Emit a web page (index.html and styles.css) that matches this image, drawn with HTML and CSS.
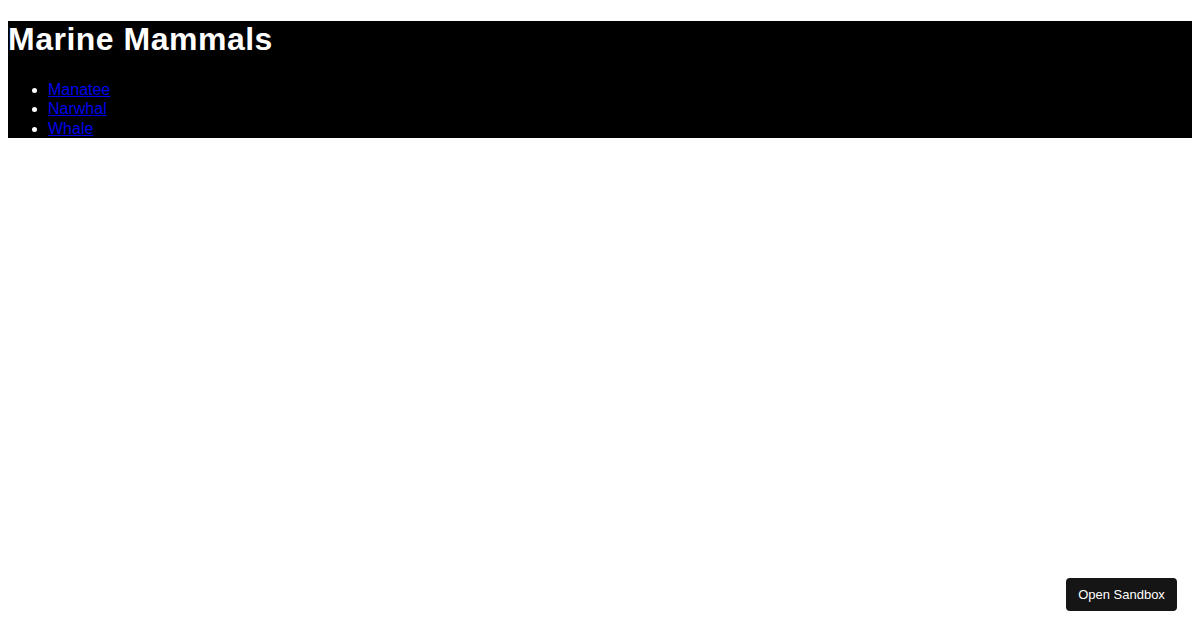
FILE: index.html
```html
<!DOCTYPE html>
<html>
<head>
<meta charset="utf-8">
<link rel="stylesheet" href="styles.css">
</head>
<body>
<div class="nav">
  <h1 class="title">Marine Mammals</h1>
  <ul class="links">
    <li><a href="#">Manatee</a></li>
    <li><a href="#">Narwhal</a></li>
    <li><a href="#">Whale</a></li>
  </ul>
</div>
<a class="sandbox-btn" href="#">Open Sandbox</a>
</body>
</html>
```
FILE: styles.css
```css
html, body {
  margin: 0;
  padding: 0;
}
body {
  padding: 21px 8px 0;
  font-family: "Liberation Sans", Arial, sans-serif;
  background: #fff;
}
.nav {
  display: flow-root;
  background: #000;
  color: #fff;
}
.title {
  font-size: 32px;
  line-height: 37px;
  letter-spacing: 0.5px;
  margin: 0 0 21.5px;
}
.links {
  margin: 0;
  padding-left: 40px;
  font-size: 16px;
  line-height: 19.5px;
}
.links a {
  color: #0000ee;
}
.sandbox-btn {
  position: fixed;
  right: 23px;
  bottom: 19px;
  width: 111px;
  height: 33px;
  box-sizing: border-box;
  display: flex;
  align-items: center;
  justify-content: center;
  background: #151515;
  color: #fff;
  border-radius: 4px;
  font-size: 13px;
  text-decoration: none;
  font-family: "Liberation Sans", Arial, sans-serif;
}
```
